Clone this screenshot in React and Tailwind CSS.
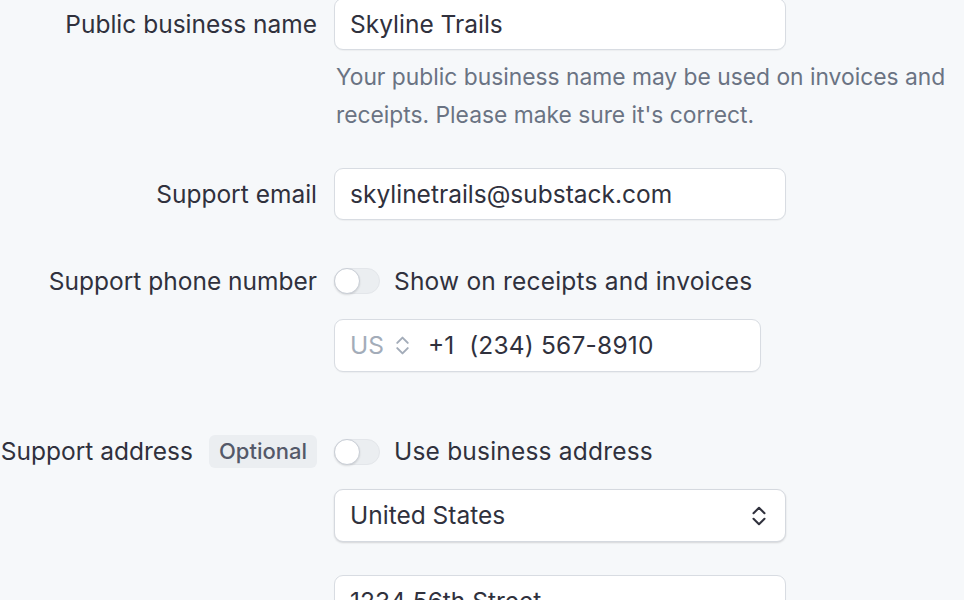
import React, { useState } from 'react';

function Toggle({ on, onChange }) {
  return (
    <button
      type="button"
      onClick={() => onChange(!on)}
      className={`relative w-[46px] h-[26px] rounded-full border shrink-0 ${on ? 'bg-[#635bff] border-[#635bff]' : 'bg-[#ebeef1] border-[#e3e6ea]'}`}
    >
      <span
        className={`absolute top-[-1px] w-[26px] h-[26px] rounded-full bg-white border border-[#c9ced6] shadow-[0_1px_2px_rgba(0,0,0,0.12)] ${on ? 'left-[19px]' : 'left-[-1px]'}`}
      />
    </button>
  );
}

function UpDown({ className }) {
  return (
    <svg viewBox="0 0 16 16" className={className} fill="none" stroke="currentColor" strokeWidth="1.5" strokeLinecap="round" strokeLinejoin="round">
      <path d="M4 6l4-4 4 4" />
      <path d="M4 10l4 4 4-4" />
    </svg>
  );
}

const inputCls = 'w-full h-[52px] px-[15px] rounded-[9px] bg-white border border-[#d8dce2] shadow-[0_1px_1px_rgba(0,0,0,0.04)] text-[24.5px] text-[#30313d] outline-none';

export default function App() {
  const [name, setName] = useState('Skyline Trails');
  const [email, setEmail] = useState('skylinetrails@substack.com');
  const [showPhone, setShowPhone] = useState(false);
  const [useBiz, setUseBiz] = useState(false);

  return (
    <div className="min-h-screen bg-[#f6f8fa] text-[#30313d] overflow-hidden" style={{ fontFamily: 'Inter, "Noto Sans", sans-serif' }}>
      <div className="-mt-[2px] grid grid-cols-[317px_452px] gap-x-[17px] text-[24.5px]">
        <div className="h-[52px] flex items-center justify-end whitespace-nowrap">Public business name</div>
        <div>
          <input className={inputCls} value={name} onChange={(e) => setName(e.target.value)} />
          <p className="mt-[8px] w-[630px] text-[22.8px] leading-[38px] text-[#6a7383] pl-[2px]">
            Your public business name may be used on invoices and receipts. Please make sure it's correct.
          </p>
        </div>

        <div className="mt-[34px] h-[52px] flex items-center justify-end whitespace-nowrap">Support email</div>
        <div className="mt-[34px]">
          <input className={inputCls} value={email} onChange={(e) => setEmail(e.target.value)} />
        </div>

        <div className="mt-[46px] h-[30px] flex items-center justify-end whitespace-nowrap">Support phone number</div>
        <div className="mt-[46px]">
          <div className="h-[30px] flex items-center gap-[14px] whitespace-nowrap tracking-[0.2px]">
            <Toggle on={showPhone} onChange={setShowPhone} />
            <span>Show on receipts and invoices</span>
          </div>
          <div className="mt-[23px] w-[427px] h-[53px] px-[15px] flex items-center rounded-[9px] bg-white border border-[#d8dce2] shadow-[0_1px_1px_rgba(0,0,0,0.04)]">
            <span className="text-[#a3acb9]">US</span>
            <UpDown className="ml-[8px] w-[21px] h-[21px] text-[#a3acb9]" />
            <span className="ml-[15px]">+1</span>
            <span className="ml-[15px] tracking-[0.2px]">(234) 567-8910</span>
          </div>
        </div>

        <div className="mt-[63px] h-[33px] flex items-center justify-end gap-[16px] whitespace-nowrap">
          <span>Support address</span>
          <span className="h-[33px] px-[10px] flex items-center rounded-[6px] bg-[#ebeef1] text-[22px] text-[#545969] font-medium">Optional</span>
        </div>
        <div className="mt-[63px]">
          <div className="h-[33px] flex items-center gap-[14px] whitespace-nowrap tracking-[0.2px]">
            <Toggle on={useBiz} onChange={setUseBiz} />
            <span>Use business address</span>
          </div>
          <button type="button" className="mt-[21px] w-full h-[53px] px-[15px] flex items-center justify-between rounded-[9px] bg-white border border-[#d5d9df] shadow-[0_1px_2px_rgba(0,0,0,0.14)] text-[24.5px] text-[#30313d]">
            <span>United States</span>
            <UpDown className="w-[22px] h-[22px] text-[#30313d]" />
          </button>
          <input className={`mt-[33px] ${inputCls}`} defaultValue="1234 56th Street" />
        </div>
      </div>
    </div>
  );
}
